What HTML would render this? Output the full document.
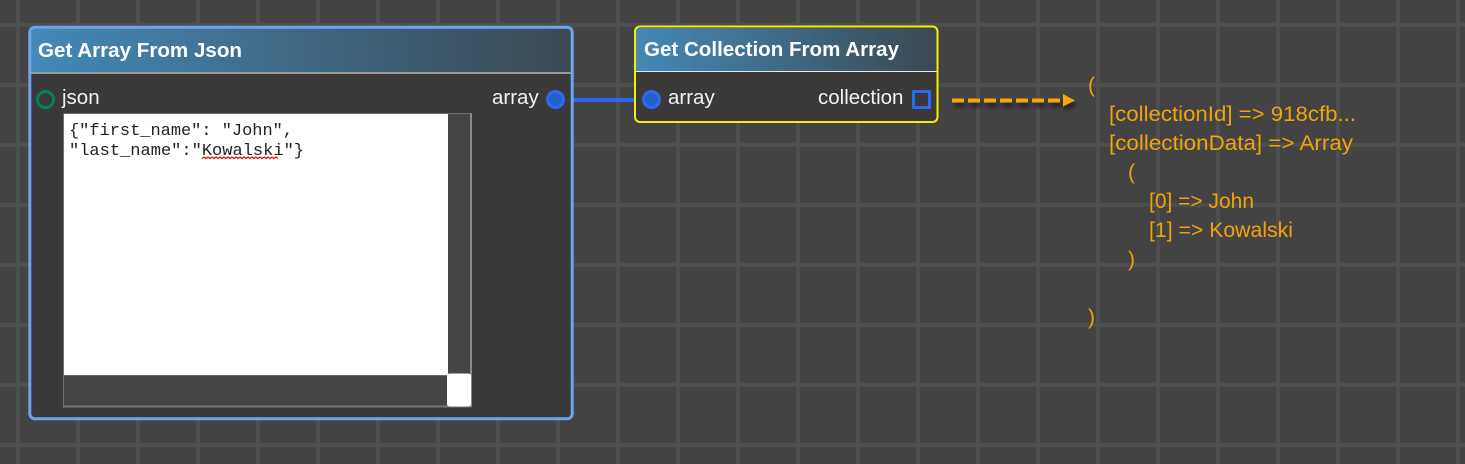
<!DOCTYPE html>
<html><head><meta charset="utf-8">
<style>
html,body{margin:0;padding:0;width:1465px;height:464px;overflow:hidden;background:#434343}
svg{position:absolute;left:0;top:0;display:block}
text{font-family:"Liberation Sans",sans-serif}
.m{font-family:"Liberation Mono",monospace;font-size:17px;fill:#222}
.o{font-size:21px;fill:#f0a30a}
.l{font-size:20.5px;fill:#f2f2f2}
.t{font-size:20.6px;font-weight:bold;fill:#fff}
</style></head>
<body>
<svg width="1465" height="464" viewBox="0 0 1465 464" xmlns="http://www.w3.org/2000/svg">
<defs>
<linearGradient id="h" x1="0" x2="1" y1="0" y2="0">
<stop offset="0" stop-color="#4389b9"/><stop offset="1" stop-color="#3c4851"/>
</linearGradient>
<filter id="s" x="-10%" y="-150%" width="120%" height="500%"><feDropShadow dx="2" dy="4" stdDeviation="2" flood-color="#000" flood-opacity=".55"/></filter>
</defs>
<rect width="1465" height="464" fill="#434343"/>
<path shape-rendering="crispEdges" stroke="#4e4e4e" stroke-width="4" fill="none" d="M18 0V464M78 0V464M138 0V464M198 0V464M258 0V464M318 0V464M378 0V464M438 0V464M498 0V464M558 0V464M618 0V464M678 0V464M738 0V464M798 0V464M858 0V464M918 0V464M978 0V464M1038 0V464M1098 0V464M1158 0V464M1218 0V464M1278 0V464M1338 0V464M1398 0V464M1458 0V464M0 25H1465M0 85H1465M0 145H1465M0 205H1465M0 265H1465M0 325H1465M0 385H1465M0 445H1465"/>

<!-- wire -->
<rect x="565" y="98" width="72" height="4" fill="#2d69f0"/>

<!-- node 1 -->
<rect x="30" y="27" width="542" height="392" rx="5" fill="#3a3937" fill-opacity=".97"/>
<path d="M31 28H571V72H31Z" fill="url(#h)"/>
<rect x="31" y="72" width="541" height="2" fill="#9a9a9a"/>
<rect x="29.800" y="27.200" width="542.400" height="391.600" rx="5" fill="none" stroke="#6ea3f0" stroke-width="3"/>
<text x="38" y="57" class="t" textLength="204" lengthAdjust="spacingAndGlyphs">Get Array From Json</text>
<circle cx="45.500" cy="99.500" r="8" fill="none" stroke="#05805f" stroke-width="3"/>
<text x="62" y="104" class="l">json</text>
<text x="492" y="104" class="l">array</text>
<circle cx="555.500" cy="99.500" r="8" fill="#2360c8" stroke="#2d69f0" stroke-width="3"/>

<!-- textarea -->
<rect x="64" y="114" width="384" height="261" fill="#fff"/>
<rect x="448" y="114" width="22" height="261" fill="#454545"/>
<rect x="64" y="376" width="383" height="30" fill="#454545"/>
<path d="M63.500 406V113.500H470.500" fill="none" stroke="#6e6e6e" shape-rendering="crispEdges"/>
<rect x="470" y="113" width="2" height="294" fill="#8a8a8a"/>
<rect x="63" y="405.500" width="408" height="2" fill="#777"/>
<rect x="64" y="375" width="383" height="1" fill="#6a6a6a"/>
<rect x="447" y="373.500" width="24" height="33" rx="2.500" fill="#fff"/>
<text x="69" y="135" class="m" textLength="224" lengthAdjust="spacingAndGlyphs">{"first_name": "John",</text>
<text x="69" y="155" class="m" textLength="235" lengthAdjust="spacingAndGlyphs">"last_name":"Kowalski"}</text>
<path d="M202 158.500l2-1.500 2 1.500 2-1.500 2 1.500 2-1.500 2 1.500 2-1.500 2 1.500 2-1.500 2 1.500 2-1.500 2 1.500 2-1.500 2 1.500 2-1.500 2 1.500 2-1.500 2 1.500 2-1.500 2 1.500 2-1.500 2 1.500 2-1.500 2 1.500 2-1.500 2 1.500 2-1.500 2 1.500 2-1.500 2 1.500 2-1.500 2 1.500 2-1.500 2 1.500 2-1.500 2 1.500 2-1.500 2 1.500" fill="none" stroke="#e01010" stroke-width="1.300"/>

<!-- node 2 -->
<rect x="635" y="26.500" width="302.500" height="95.500" rx="5" fill="#3a3937" fill-opacity=".97"/>
<path d="M636 28H936.500V71H636Z" fill="url(#h)"/>
<rect x="636" y="71" width="301" height="1" fill="#e8e8e8"/>
<rect x="635" y="26.500" width="302.500" height="95.500" rx="5" fill="none" stroke="#f5ee00" stroke-width="2"/>
<text x="644" y="56" class="t" textLength="255" lengthAdjust="spacingAndGlyphs">Get Collection From Array</text>
<circle cx="651.500" cy="99.500" r="8" fill="#2360c8" stroke="#2d69f0" stroke-width="3"/>
<text x="668" y="104" class="l">array</text>
<text x="818" y="104" class="l">collection</text>
<rect x="913.500" y="91.500" width="16" height="16" fill="none" stroke="#2d69f0" stroke-width="3"/>

<!-- arrow -->
<g filter="url(#s)">
<path d="M952 100.500H1060" fill="none" stroke="#f5a80a" stroke-width="4" stroke-dasharray="12 4"/>
<path d="M1063 94L1075 100.500L1063 106.500Z" fill="#f5a80a"/>
</g>

<!-- output -->
<text x="1088" y="92" class="o">(</text>
<text x="1109" y="121" class="o" textLength="247" lengthAdjust="spacingAndGlyphs">[collectionId] =&gt; 918cfb...</text>
<text x="1109" y="150" class="o" textLength="244" lengthAdjust="spacingAndGlyphs">[collectionData] =&gt; Array</text>
<text x="1128" y="179" class="o">(</text>
<text x="1149" y="208" class="o" textLength="105" lengthAdjust="spacingAndGlyphs">[0] =&gt; John</text>
<text x="1149" y="237" class="o" textLength="144" lengthAdjust="spacingAndGlyphs">[1] =&gt; Kowalski</text>
<text x="1128" y="266" class="o">)</text>
<text x="1088" y="324" class="o">)</text>
</svg>
</body></html>
